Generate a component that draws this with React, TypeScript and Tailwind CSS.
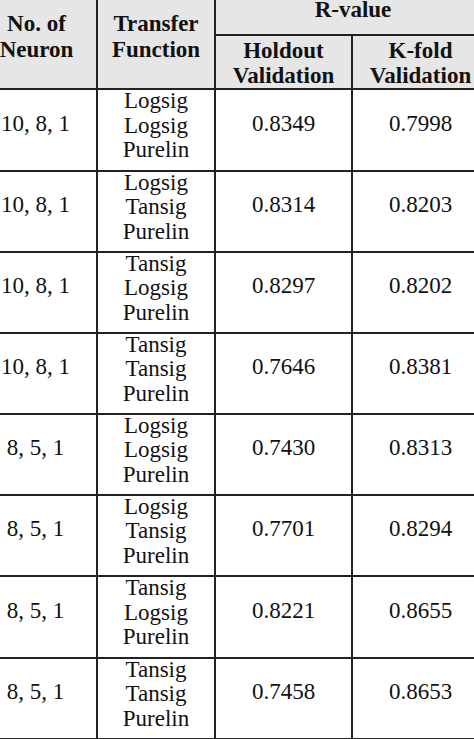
import React from "react";

const rows: [string, string[], string, string][] = [
  ["10, 8, 1", ["Logsig", "Logsig", "Purelin"], "0.8349", "0.7998"],
  ["10, 8, 1", ["Logsig", "Tansig", "Purelin"], "0.8314", "0.8203"],
  ["10, 8, 1", ["Tansig", "Logsig", "Purelin"], "0.8297", "0.8202"],
  ["10, 8, 1", ["Tansig", "Tansig", "Purelin"], "0.7646", "0.8381"],
  ["8, 5, 1", ["Logsig", "Logsig", "Purelin"], "0.7430", "0.8313"],
  ["8, 5, 1", ["Logsig", "Tansig", "Purelin"], "0.7701", "0.8294"],
  ["8, 5, 1", ["Tansig", "Logsig", "Purelin"], "0.8221", "0.8655"],
  ["8, 5, 1", ["Tansig", "Tansig", "Purelin"], "0.7458", "0.8653"],
];

function BodyCell({ children }: { children: React.ReactNode }) {
  return (
    <div className="flex items-center justify-center border-b-2 border-r-2 border-[#222] overflow-visible">
      <div className="mb-[12px] text-center leading-[24.5px] whitespace-nowrap">{children}</div>
    </div>
  );
}

function FuncCell({ items }: { items: string[] }) {
  return (
    <div className="flex items-center justify-center border-b-2 border-r-2 border-[#222] overflow-visible">
      <div className="mb-[8px] text-center leading-[24.5px] whitespace-nowrap">
        {items.map((t, j) => (
          <div key={j}>{t}</div>
        ))}
      </div>
    </div>
  );
}

export default function App() {
  return (
    <div
      className="w-[474px] h-[739px] overflow-hidden bg-white text-[#111] text-[23px]"
      style={{ fontFamily: '"Liberation Serif", "Times New Roman", serif' }}
    >
      <div className="-ml-[25px] w-max grid grid-cols-[123px_118px_137px_137px] grid-rows-[36px_54px_82px_81px_81px_81px_81px_81px_82px_81px]">
        <div className="row-span-2 bg-[#e6e6e6] border-b-2 border-r-2 border-[#222] pt-[11px] pl-[2px] text-center font-bold leading-[26px]">
          <div>No. of</div>
          <div>Neuron</div>
        </div>
        <div className="row-span-2 bg-[#e6e6e6] border-b-2 border-r-2 border-[#222] pt-[11px] text-center font-bold leading-[26px]">
          <div>Transfer</div>
          <div>Function</div>
        </div>
        <div className="col-span-2 bg-[#e6e6e6] border-b-2 border-[#222] text-center font-bold leading-[26px]">
          <div className="-mt-[3px]">R-value</div>
        </div>
        <div className="bg-[#e6e6e6] border-b-2 border-r-2 border-[#222] pt-[2px] text-center font-bold leading-[25px]">
          <div>Holdout</div>
          <div>Validation</div>
        </div>
        <div className="bg-[#e6e6e6] border-b-2 border-r-2 border-[#222] pt-[2px] text-center font-bold leading-[25px] whitespace-nowrap">
          <div>K-fold</div>
          <div>Validation</div>
        </div>
        {rows.map((r, i) => (
          <React.Fragment key={i}>
            <BodyCell>{r[0]}</BodyCell>
            <FuncCell items={r[1]} />
            <BodyCell>{r[2]}</BodyCell>
            <BodyCell>{r[3]}</BodyCell>
          </React.Fragment>
        ))}
      </div>
    </div>
  );
}
